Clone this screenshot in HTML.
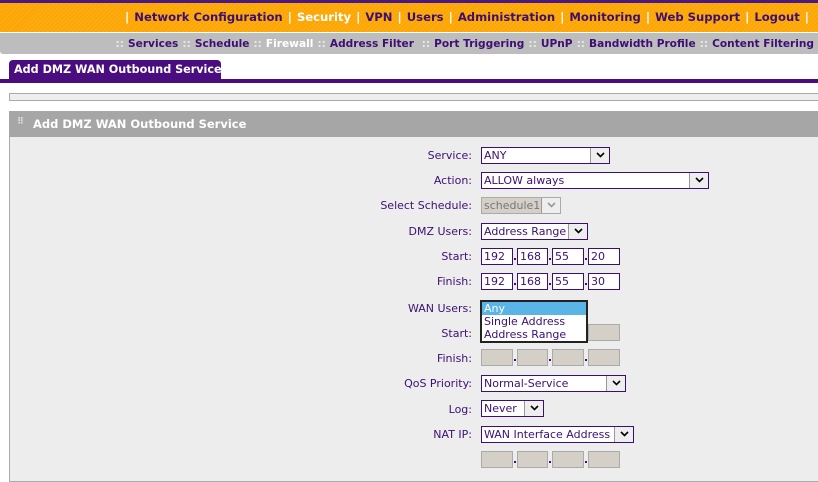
<!DOCTYPE html>
<html><head><style>
*{margin:0;padding:0;box-sizing:border-box}
body{width:818px;height:482px;overflow:hidden;background:#fff;font-family:"DejaVu Sans","Liberation Sans",sans-serif;position:relative}
.a{position:absolute;white-space:nowrap}
.top{left:0;top:0;width:818px;height:3px;background:#4a1a80}
.or{left:0;top:3px;width:818px;height:29px;background:repeating-linear-gradient(135deg,#ffa500 0 2px,#f7b020 2px 3px);}
.nav{top:10px;right:4px;font-size:11.6px;font-weight:bold;color:#3d0f74}
.nav .s{color:#fff;margin:0 5px}
.nav .w{color:#fff}
.gr{left:0;top:33px;width:818px;height:21px;background:#bdbdbd;border-radius:0 0 0 3px}
.sub{top:38px;right:4px;font-size:10.6px;font-weight:bold;color:#3d0f74}
.sub .d{color:#e8e8e8;margin:0 4px}
.sub .w{color:#fff}
.tab{left:9px;top:60px;height:19px;width:212px;background:#4a0d80;color:#fff;font-size:11.2px;font-weight:bold;padding:3px 5px;border-radius:4px 4px 0 0}
.pl{left:0;top:79px;width:818px;height:4px;background:#4a0d80}
.thin{left:9px;top:93px;width:809px;height:8px;border:1px solid #aaa;background:#eee;border-right:none}
.ph{left:9px;top:111px;width:809px;height:26px;background:#a6a6a6;color:#fff;font-size:11.5px;font-weight:bold;padding:6px 0 0 24px}
.pb{left:9px;top:137px;width:809px;height:345px;background:#ededed;border:1px solid #aaa;border-right:none;border-top:none}
.lb{right:346px;font-size:11px;color:#3d0f74;text-align:right}
.sel{height:17px;border:1px solid #3d0f74;background:#fff;font-size:11px;color:#3d0f74;padding:0 2px;line-height:15px;overflow:hidden}
.sel .b{position:absolute;right:0;top:0;width:19px;height:15px;border-left:1px solid #999;background:#eee}
.sel .b svg{position:absolute;left:5px;top:4px}
.ip{height:17px;border:1px solid #3d0f74;background:#fff;font-size:11px;color:#3d0f74;padding:0 2px;line-height:15px}
.dis{height:17px;border:1px solid #aaa;background:#d4d0c8}
.dot{width:2px;height:2px;background:#3d0f74}
</style></head><body>
<div class="a top"></div>
<div class="a or"></div>
<div class="a nav"><span class="s">|</span>Network Configuration<span class="s">|</span><span class="w">Security</span><span class="s">|</span>VPN<span class="s">|</span>Users<span class="s">|</span>Administration<span class="s">|</span>Monitoring<span class="s">|</span>Web Support<span class="s">|</span>Logout<span class="s">|</span></div>
<div class="a gr"></div>
<div class="a sub"><span class="d">::</span>Services<span class="d">::</span>Schedule<span class="d">::</span><span class="w">Firewall</span><span class="d">::</span>Address Filter <span class="d">::</span>Port Triggering<span class="d">::</span>UPnP<span class="d">::</span>Bandwidth Profile<span class="d">::</span>Content Filtering</div>
<div class="a tab">Add DMZ WAN Outbound Service</div>
<div class="a pl"></div>
<div class="a thin"></div>
<div class="a ph"><span style="position:absolute;left:8px;top:6px;font-size:9px;color:#ddd">⠿</span>Add DMZ WAN Outbound Service</div>
<div class="a pb"></div>

<div class="a lb" style="top:149px">Service:</div>
<div class="a sel" style="left:481px;top:147px;width:129px">ANY<span class="b"><svg width="9" height="6"><path d="M1 1L4.5 4.5L8 1" stroke="#000" stroke-width="1.6" fill="none"/></svg></span></div>
<div class="a lb" style="top:174px">Action:</div>
<div class="a sel" style="left:481px;top:172px;width:228px">ALLOW always<span class="b"><svg width="9" height="6"><path d="M1 1L4.5 4.5L8 1" stroke="#000" stroke-width="1.6" fill="none"/></svg></span></div>
<div class="a lb" style="top:199px">Select Schedule:</div>
<div class="a sel" style="left:481px;top:197px;width:80px;background:#d4d0c8;border-color:#aaa;color:#777">schedule1<span class="b"><svg width="9" height="6"><path d="M1 1L4.5 4.5L8 1" stroke="#999" stroke-width="1.6" fill="none"/></svg></span></div>
<div class="a lb" style="top:225px">DMZ Users:</div>
<div class="a sel" style="left:481px;top:223px;width:107px">Address Range<span class="b"><svg width="9" height="6"><path d="M1 1L4.5 4.5L8 1" stroke="#000" stroke-width="1.6" fill="none"/></svg></span></div>

<div class="a lb" style="top:250px">Start:</div>
<div class="a ip" style="left:481px;top:248px;width:32px">192</div><div class="a ip" style="left:517px;top:248px;width:31px">168</div><div class="a ip" style="left:552px;top:248px;width:32px">55</div><div class="a ip" style="left:588px;top:248px;width:32px">20</div>
<div class="a dot" style="left:514px;top:258px"></div><div class="a dot" style="left:549px;top:258px"></div><div class="a dot" style="left:585px;top:258px"></div>
<div class="a lb" style="top:275px">Finish:</div>
<div class="a ip" style="left:481px;top:273px;width:32px">192</div><div class="a ip" style="left:517px;top:273px;width:31px">168</div><div class="a ip" style="left:552px;top:273px;width:32px">55</div><div class="a ip" style="left:588px;top:273px;width:32px">30</div>
<div class="a dot" style="left:514px;top:283px"></div><div class="a dot" style="left:549px;top:283px"></div><div class="a dot" style="left:585px;top:283px"></div>

<div class="a lb" style="top:302px">WAN Users:</div>
<div class="a lb" style="top:327px">Start:</div>
<div class="a dis" style="left:588px;top:324px;width:32px"></div>
<div class="a lb" style="top:352px">Finish:</div>
<div class="a dis" style="left:481px;top:349px;width:32px"></div><div class="a dis" style="left:517px;top:349px;width:31px"></div><div class="a dis" style="left:552px;top:349px;width:32px"></div><div class="a dis" style="left:588px;top:349px;width:32px"></div>
<div class="a dot" style="left:514px;top:359px"></div><div class="a dot" style="left:549px;top:359px"></div><div class="a dot" style="left:585px;top:359px"></div>
<div class="a" style="left:480px;top:300px;width:108px;height:43px;border:2px solid #222;background:#fff;font-size:11px;color:#3d0f74;line-height:13px">
<div style="background:#5ab4e5;color:#fff;padding-left:2px">Any</div><div style="padding-left:2px">Single Address</div><div style="padding-left:2px">Address Range</div></div>

<div class="a lb" style="top:377px">QoS Priority:</div>
<div class="a sel" style="left:481px;top:375px;width:145px">Normal-Service<span class="b"><svg width="9" height="6"><path d="M1 1L4.5 4.5L8 1" stroke="#000" stroke-width="1.6" fill="none"/></svg></span></div>
<div class="a lb" style="top:403px">Log:</div>
<div class="a sel" style="left:481px;top:400px;width:63px">Never<span class="b"><svg width="9" height="6"><path d="M1 1L4.5 4.5L8 1" stroke="#000" stroke-width="1.6" fill="none"/></svg></span></div>
<div class="a lb" style="top:428px">NAT IP:</div>
<div class="a sel" style="left:481px;top:426px;width:153px">WAN Interface Address<span class="b"><svg width="9" height="6"><path d="M1 1L4.5 4.5L8 1" stroke="#000" stroke-width="1.6" fill="none"/></svg></span></div>
<div class="a dis" style="left:481px;top:451px;width:32px"></div><div class="a dis" style="left:517px;top:451px;width:31px"></div><div class="a dis" style="left:552px;top:451px;width:32px"></div><div class="a dis" style="left:588px;top:451px;width:32px"></div>
<div class="a dot" style="left:514px;top:461px"></div><div class="a dot" style="left:549px;top:461px"></div><div class="a dot" style="left:585px;top:461px"></div>
</body></html>
